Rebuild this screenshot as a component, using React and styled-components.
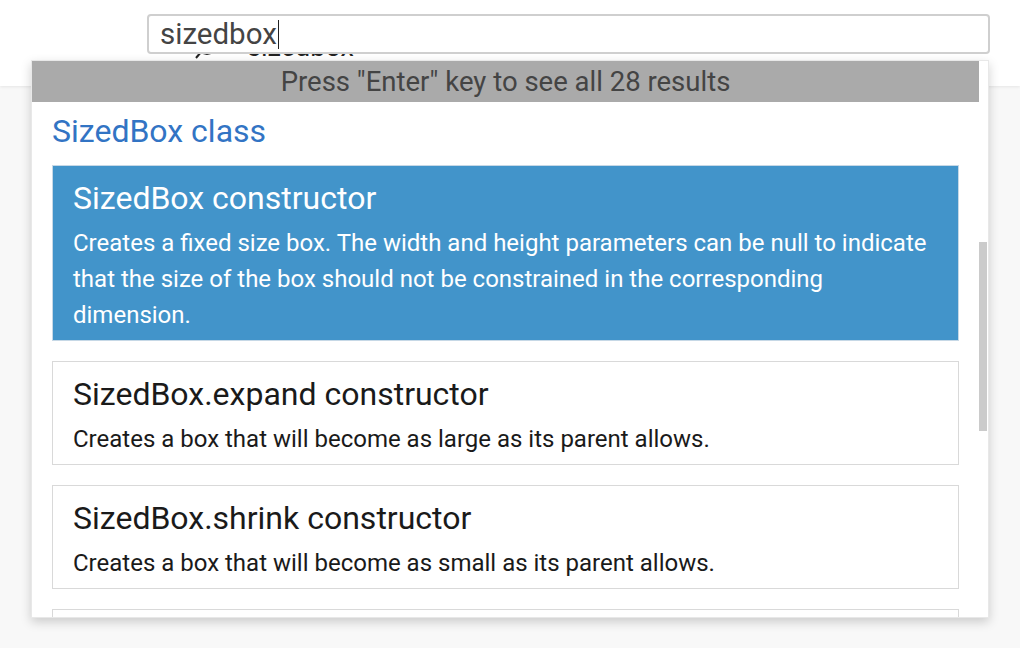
import React from 'react';
import styled, { createGlobalStyle } from 'styled-components';

const GlobalStyle = createGlobalStyle`
  html, body {
    margin: 0;
    padding: 0;
    background: #f8f8f8;
    font-family: Roboto, "Liberation Sans", Arial, sans-serif;
  }
  * {
    box-sizing: border-box;
  }
`;

const Page = styled.div`
  width: 1020px;
  height: 648px;
  overflow: hidden;
`;

const TopBar = styled.header`
  height: 86px;
  background: #fff;
  box-shadow: 0 1px 3px rgba(0, 0, 0, 0.08);
  padding-top: 14px;
  padding-left: 147px;
`;

const SearchWrap = styled.div`
  position: relative;
  width: 843px;
`;

const Input = styled.div`
  position: relative;
  z-index: 2;
  height: 40px;
  border: 2px solid #cfcfcf;
  border-radius: 4px;
  background: #fff;
  display: flex;
  align-items: center;
  padding-left: 11px;
  font-size: 29.5px;
  color: #444;
`;

const Caret = styled.span`
  display: inline-block;
  width: 1.5px;
  height: 29px;
  background: #222;
  margin-left: 1px;
`;

// result heading that sits under the input and only peeks out below it
const Ghost = styled.div`
  position: absolute;
  z-index: 1;
  top: 17px;
  left: 48px;
  display: flex;
  align-items: center;
  gap: 30px;
  font-size: 27px;
  color: #222;
`;

const Dropdown = styled.div`
  position: absolute;
  z-index: 3;
  top: 46px;
  left: -116px;
  width: 958px;
  height: 558px;
  background: #fff;
  border: 1px solid #e8e8e8;
  box-shadow: 0 4px 10px rgba(0, 0, 0, 0.18);
  display: flex;
  overflow: hidden;
`;

const Content = styled.div`
  flex: 1;
  min-width: 0;
`;

const EnterBar = styled.div`
  height: 41px;
  background: #aaaaaa;
  color: #444;
  font-size: 27.5px;
  display: flex;
  align-items: center;
  justify-content: center;
`;

const Results = styled.div`
  padding: 11px 20px 0 20px;
  display: flex;
  flex-direction: column;
  gap: 20px;
`;

const ClassLink = styled.a`
  display: block;
  color: #3274c4;
  font-size: 32px;
  line-height: 36px;
  text-decoration: none;
  margin-bottom: -4px;
`;

const Card = styled.div`
  border: 1px solid ${(p) => (p.$active ? '#c6d8e6' : '#d9d9d9')};
  background: ${(p) => (p.$active ? '#4294ca' : '#fff')};
  color: ${(p) => (p.$active ? '#fff' : '#1a1a1a')};
  padding: 14px 20px 7px 20px;
  flex-shrink: 0;
`;

const CardTitle = styled.div`
  font-size: 32px;
  line-height: 36px;
  margin-bottom: 9px;
`;

const CardText = styled.div`
  font-size: 24px;
  line-height: 36px;
`;

const Track = styled.div`
  width: 9px;
  flex-shrink: 0;
  padding-top: 181px;
`;

const Thumb = styled.div`
  width: 8px;
  height: 189px;
  background: #cbcbcb;
`;

const results = [
  {
    title: 'SizedBox constructor',
    text:
      'Creates a fixed size box. The width and height parameters can be null to indicate that the size of the box should not be constrained in the corresponding dimension.',
    active: true,
  },
  {
    title: 'SizedBox.expand constructor',
    text: 'Creates a box that will become as large as its parent allows.',
  },
  {
    title: 'SizedBox.shrink constructor',
    text: 'Creates a box that will become as small as its parent allows.',
  },
  {
    title: 'SizedBox.fromSize constructor',
    text: 'Creates a box with the specified size.',
  },
];

const App = () => {
  return (
    <Page>
      <GlobalStyle />
      <TopBar>
        <SearchWrap>
          <Ghost>
            <svg width="22" height="26" viewBox="0 0 22 26" fill="none" stroke="#222" strokeWidth="2">
              <circle cx="12" cy="11" r="9" />
              <path d="M6 18l-5 6" />
            </svg>
            <span>sizedbox</span>
          </Ghost>
          <Input>
            sizedbox<Caret />
          </Input>
          <Dropdown>
            <Content>
              <EnterBar>Press "Enter" key to see all 28 results</EnterBar>
              <Results>
                <ClassLink href="#">SizedBox class</ClassLink>
                {results.map((r) => (
                  <Card key={r.title} $active={r.active}>
                    <CardTitle>{r.title}</CardTitle>
                    <CardText>{r.text}</CardText>
                  </Card>
                ))}
              </Results>
            </Content>
            <Track>
              <Thumb />
            </Track>
          </Dropdown>
        </SearchWrap>
      </TopBar>
    </Page>
  );
};

export default App;
